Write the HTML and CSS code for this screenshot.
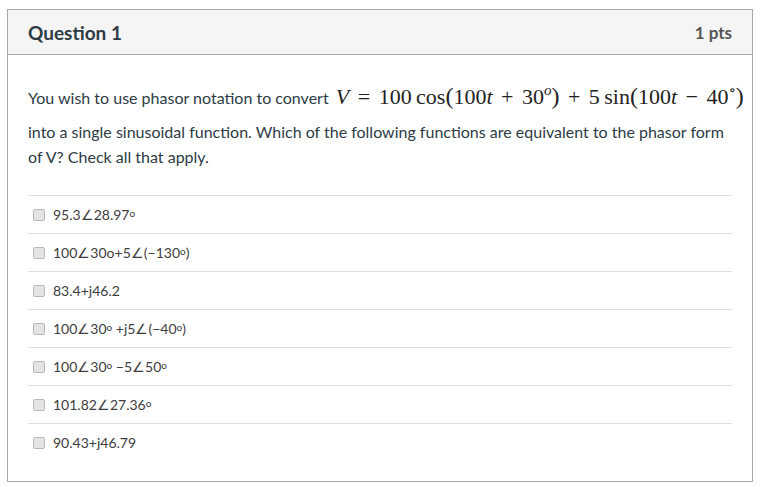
FILE: index.html
```html
<!DOCTYPE html>
<html>
<head>
<meta charset="utf-8">
<link rel="stylesheet" href="styles.css">
</head>
<body>
<div class="question">
  <div class="q-header">
    <span class="q-title">Question 1</span>
    <span class="q-pts">1 pts</span>
  </div>
  <div class="q-body">
    <p class="q-text"><span class="first-line">You wish to use phasor notation to convert <span class="math"><i>V</i> <span class="op">=</span> 100&#8201;cos<span class="paren">(</span>100<i>t</i> <span class="op">+</span> 30<sup><i>o</i></sup><span class="paren">)</span> <span class="op">+</span> 5&#8201;sin<span class="paren">(</span>100<i>t</i> <span class="op">&minus;</span> 40<sup class="degsup">&#8728;</sup><span class="paren">)</span></span></span> into a single sinusoidal function. Which of the following functions are equivalent to the phasor form of V? Check all that apply.</p>
    <div class="answers">
      <label class="answer"><input type="checkbox" class="cb"><span>95.3&ang;28.97<span class="deg">o</span></span></label>
      <label class="answer"><input type="checkbox" class="cb"><span>100&ang;30o+5&ang;(&minus;130<span class="deg">o</span>)</span></label>
      <label class="answer"><input type="checkbox" class="cb"><span>83.4+j46.2</span></label>
      <label class="answer"><input type="checkbox" class="cb"><span>100&ang;30<span class="deg">o</span> +j5&ang;(&minus;40<span class="deg">o</span>)</span></label>
      <label class="answer"><input type="checkbox" class="cb"><span>100&ang;30<span class="deg">o</span> &minus;5&ang;50<span class="deg">o</span></span></label>
      <label class="answer"><input type="checkbox" class="cb"><span>101.82&ang;27.36<span class="deg">o</span></span></label>
      <label class="answer"><input type="checkbox" class="cb"><span>90.43+j46.79</span></label>
    </div>
  </div>
</div>
</body>
</html>
```

FILE: styles.css
```css
html, body {
  margin: 0;
  padding: 0;
  background: #fff;
}
body {
  font-family: Lato, "Liberation Sans", sans-serif;
  color: #2d3b45;
}
.question {
  margin: 9px 0 0 7px;
  width: 744px;
  height: 471px;
  border: 1px solid #a8a8a8;
  box-sizing: content-box;
}
.q-header {
  height: 44px;
  background: #f5f5f5;
  border-bottom: 1px solid #a8a8a8;
  display: flex;
  align-items: center;
  justify-content: space-between;
  padding: 0 20px;
}
.q-title {
  font-size: 19px;
  font-weight: bold;
  color: #2d3b45;
}
.q-pts {
  font-size: 17px;
  font-weight: bold;
  color: #555;
}
.q-body {
  padding: 19px 20px 0 20px;
}
.q-text {
  margin: 0;
  font-size: 16px;
  line-height: 25px;
  color: #2d3b45;
}
.first-line {
  white-space: nowrap;
}
.math {
  font-family: "Liberation Serif", "DejaVu Serif", serif;
  font-size: 22px;
  line-height: 45px;
  color: #222;
  white-space: nowrap;
  margin-left: 3px;
}
.math i {
  font-style: italic;
}
.math .op {
  padding: 0 3px;
}
.math .paren {
  font-size: 24px;
}
.math sup {
  font-size: 15px;
  vertical-align: 9px;
  line-height: 0;
}
.math sup.degsup {
  font-size: 15px;
}
.answers {
  margin-top: 26px;
  border-top: 1px solid #e0e0e0;
}
.answer {
  display: flex;
  align-items: center;
  height: 37px;
  border-bottom: 1px solid #e0e0e0;
  padding-left: 5px;
  font-size: 14px;
  color: #3d3d3d;
}
.answer:last-child {
  border-bottom: none;
}
.cb {
  appearance: none;
  -webkit-appearance: none;
  width: 12px;
  height: 12px;
  margin: 0 8px 0 0;
  background: #e4e4e4;
  border: 1px solid #b8b8b8;
  border-radius: 2px;
}
.deg {
  font-size: 10px;
  vertical-align: 3px;
}
```
